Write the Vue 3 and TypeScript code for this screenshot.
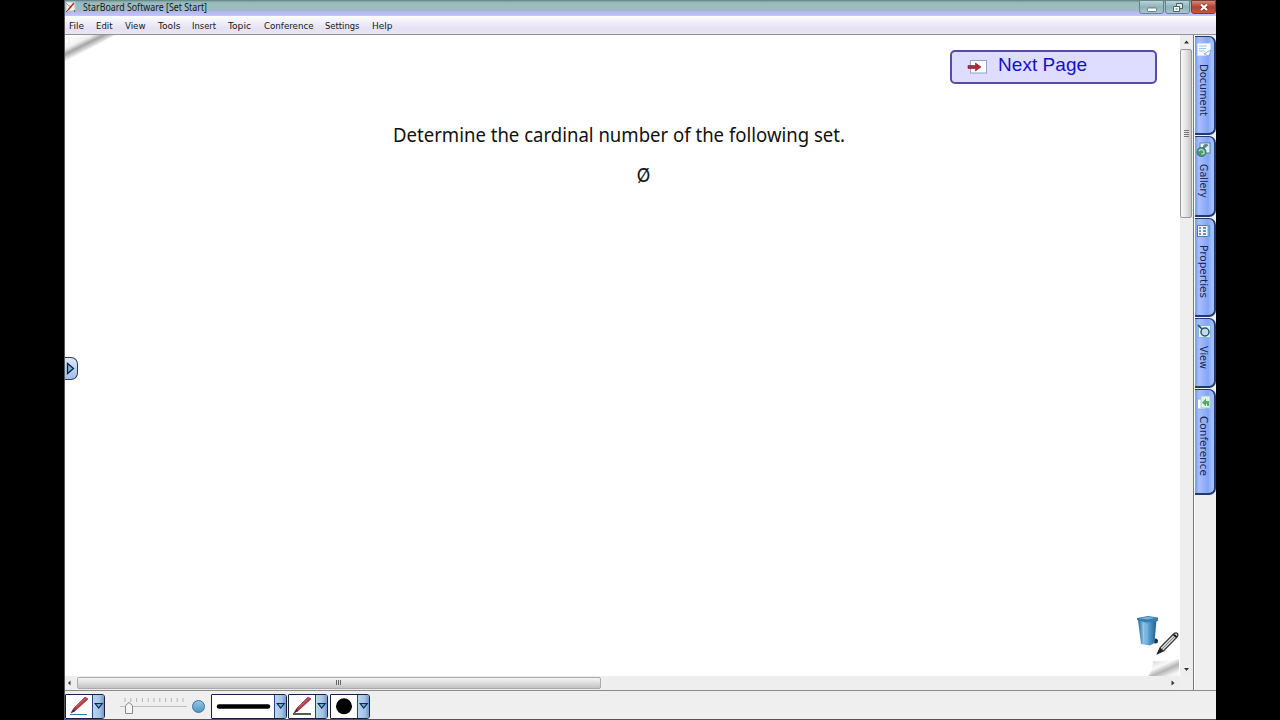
<script setup lang="ts">
interface MenuItem { label: string; left: number; width: number }
interface Tab { label: string; icon: string; height: number; start: number; length: number }

const menus: MenuItem[] = [
  { label: 'File', left: 3.5, width: 15 },
  { label: 'Edit', left: 12, width: 16.5 },
  { label: 'View', left: 12.5, width: 20.5 },
  { label: 'Tools', left: 12.5, width: 22.5 },
  { label: 'Insert', left: 11.5, width: 24 },
  { label: 'Topic', left: 12.5, width: 23 },
  { label: 'Conference', left: 12.5, width: 49.5 },
  { label: 'Settings', left: 12, width: 34.5 },
  { label: 'Help', left: 12.5, width: 20.5 },
]

const tabs: Tab[] = [
  { label: 'Document', icon: 'document', height: 99, start: 27, length: 52 },
  { label: 'Gallery', icon: 'gallery', height: 81, start: 27, length: 34 },
  { label: 'Properties', icon: 'properties', height: 99, start: 26, length: 53 },
  { label: 'View', icon: 'view', height: 70, start: 27, length: 23 },
  { label: 'Conference', icon: 'conference', height: 106, start: 26, length: 60 },
]

const ticks: number[] = Array.from({ length: 11 }, (_, i) => 5 + i * 5.8)
</script>

<template>
  <div class="screen">
    <div class="window">
      <header class="titlebar">
        <svg class="app-icon" width="12" height="12" viewBox="0 0 12 12">
          <rect x="1" y="1" width="9" height="9" fill="#f5f3ed" stroke="#c3c4bd" />
          <path d="M1 2l3 3 3 1" stroke="#cf8b48" fill="none" />
          <path d="M3 9l6-7" stroke="#ad3030" stroke-width="1.6" />
          <path d="M1 11l2-2M9 9l1 2" stroke="#4d5362" />
        </svg>
        <svg class="title" width="130" height="15">
          <text x="0" y="11" textLength="124" lengthAdjust="spacingAndGlyphs">StarBoard Software [Set Start]</text>
        </svg>
        <div class="controls">
          <div class="ctl">
            <svg width="23" height="13"><rect x="7.5" y="7" width="9" height="3.5" rx="1" fill="#fff" stroke="#53686e" stroke-width=".8" /></svg>
          </div>
          <div class="ctl">
            <svg width="23" height="13"><path d="M10.5 2.5h6v5h-6z" fill="#d9e6e8" stroke="#4f6268" /><path d="M7.500 5.500h6v5h-6z" fill="#fff" stroke="#4f6268" /><path d="M9.500 8h2" stroke="#4f6268" /></svg>
          </div>
          <div class="ctl close">
            <svg width="23" height="13"><path d="M9 3.500l6 5.500M15 3.500l-6 5.500" stroke="#6c3030" stroke-width="3.600" /><path d="M9 3.500l6 5.500M15 3.500l-6 5.500" stroke="#fff" stroke-width="2.200" /></svg>
          </div>
        </div>
      </header>

      <nav class="menubar">
        <svg v-for="m in menus" :key="m.label" :width="m.width" height="18" :style="{ marginLeft: m.left + 'px' }">
          <text x="0" y="13" :textLength="m.width" lengthAdjust="spacingAndGlyphs">{{ m.label }}</text>
        </svg>
      </nav>

      <main class="workspace">
        <section class="board">
          <div class="page">
            <svg class="curl-top" width="60" height="32" viewBox="0 0 60 32">
              <defs>
                <linearGradient id="curlA" gradientUnits="userSpaceOnUse" x1="12" y1="1" x2="20" y2="17">
                  <stop offset="0" stop-color="#fff" /><stop offset=".35" stop-color="#f0f0f0" />
                  <stop offset=".62" stop-color="#a4a4a4" /><stop offset="1" stop-color="#fff" />
                </linearGradient>
              </defs>
              <path d="M0 0H50L0 27z" fill="url(#curlA)" />
              <path d="M4 10V3h22" fill="none" stroke="#ececec" />
            </svg>
            <button class="next">
              <svg width="22" height="18" viewBox="0 0 22 18">
                <rect x="3.500" y="2.500" width="16" height="12.500" fill="#fafcff" stroke="#91a6c7" />
                <path d="M1 7.500h7.500V5l5.500 4-5.500 4v-2.500H1z" fill="#b32835" stroke="#7c1d28" stroke-width=".6" />
              </svg>
              <span>Next Page</span>
            </button>
            <svg class="question" width="460" height="30">
              <text x="0" y="21" textLength="452" lengthAdjust="spacingAndGlyphs">Determine the cardinal number of the following set.</text>
            </svg>
            <svg class="emptyset" width="20" height="24">
              <text x="2" y="18" textLength="13" lengthAdjust="spacingAndGlyphs">Ø</text>
            </svg>
            <div class="expander">
              <svg width="13" height="22" viewBox="0 0 13 22">
                <path d="M2.500 5.500v10l6-5z" fill="#7bb3df" stroke="#101e42" stroke-width="1.300" />
              </svg>
            </div>
            <svg class="bin" width="24" height="34" viewBox="0 0 24 34">
              <defs><linearGradient id="binFill"><stop offset="0" stop-color="#28699d" /><stop offset=".3" stop-color="#8ac1e6" /><stop offset=".65" stop-color="#4d94c8" /><stop offset="1" stop-color="#285d8b" /></linearGradient></defs>
              <circle cx="19.500" cy="26" r="2.500" fill="#253449" />
              <path d="M2 5h18.500l-2 23-4.500 2.500-9-1.500z" fill="url(#binFill)" />
              <path d="M1 3l11-2 10 1.500v3.500L10 7.500 1 5z" fill="#3b7cad" />
              <path d="M3 3l9-1 8 1-9 1.500z" fill="#79b3d8" />
              <path d="M7 9l1 17M11 9v19" stroke="#b0d7ef" opacity=".45" />
            </svg>
            <svg class="pen" width="26" height="26" viewBox="0 0 26 26">
              <path d="M2.500 22.500l2.700-6L18.500 3q2.500-2 3.900-.6t-.7 4L8.500 20z" fill="#d5d5d5" stroke="#333" stroke-width="1.200" />
              <path d="M7 18L19.500 5.500" stroke="#888" />
              <path d="M2 23.500l3-7 3.700 3z" fill="#252525" /><path d="M18.500 3.500l3.500 3" stroke="#222" stroke-width="2" />
            </svg>
            <svg class="curl-bottom" width="32" height="17" viewBox="0 0 32 17">
              <defs><linearGradient id="curlB" gradientUnits="userSpaceOnUse" x1="11" y1="0" x2="19" y2="18"><stop offset="0" stop-color="#dedede" /><stop offset=".35" stop-color="#f8f8f8" /><stop offset=".65" stop-color="#b4b4b4" /><stop offset="1" stop-color="#f5f5f5" /></linearGradient></defs>
              <path d="M0 17Q5 12 5 2Q18 3 31 0V17z" fill="url(#curlB)" />
            </svg>
          </div>
          <div class="vscroll">
            <svg width="13" height="14"><path d="M4 8.500l2.500-3L9 8.500z" fill="#333" /></svg>
            <div class="vthumb"><i class="grip"></i></div>
            <svg class="end" width="13" height="14"><path d="M4 6h5L6.500 9z" fill="#333" /></svg>
          </div>
          <div class="hscroll">
            <svg width="12" height="12"><path d="M5.500 3.500v5L3 6z" fill="#333" /></svg>
            <div class="hthumb"><i class="grip"></i></div>
            <svg class="end" width="14" height="12"><path d="M5.500 3.500v5l3-2.500z" fill="#333" /></svg>
          </div>
        </section>

        <aside class="tabs">
          <div v-for="t in tabs" :key="t.label" class="tab" :style="{ height: t.height + 'px' }">
            <svg width="19" :height="t.height - 2">
              <g v-if="t.icon === 'document'">
                <path d="M2.500 6.500h13v9l-3 3h-10z" fill="#f7fbff" stroke="#cfe1f8" />
                <path d="M4 9h8M4 11.500h7M4 14h6" stroke="#9ac6ee" /><path d="M9 17l7-4-2 6z" fill="#fff" stroke="#5c8dc9" stroke-width=".7" />
              </g>
              <g v-else-if="t.icon === 'gallery'">
                <rect x="5" y="6" width="10" height="10" fill="#eaf5f9" stroke="#5f8295" />
                <circle cx="11" cy="10" r="3" fill="#5d8293" /><path d="M10 11l4-3v6h-5z" fill="#ddeef5" />
                <circle cx="6.500" cy="15" r="4.500" fill="#4a967c" stroke="#367267" /><path d="M3.500 14q3-3 5 0t-2 3" fill="none" stroke="#b0dba7" stroke-width="1.500" />
              </g>
              <g v-else-if="t.icon === 'properties'">
                <rect x="2.500" y="6.500" width="12" height="11" fill="#edf7ff" stroke="#4f7cae" /><path d="M13.500 6v12" stroke="#70a5d5" stroke-width="2" />
                <path d="M4 9h2M8 9h3M4 12h2M8 12h3M4 15h2M8 15h3" stroke="#4f7196" stroke-width="1.300" />
              </g>
              <g v-else-if="t.icon === 'view'">
                <path d="M3.500 6.500h12v12h-12z" fill="#e0f1f7" stroke="#83b9cd" /><circle cx="10" cy="13" r="4" fill="#c3dcec" stroke="#334f6c" stroke-width="1.500" /><path d="M3 6l4 4" stroke="#2d495f" stroke-width="1.700" />
              </g>
              <g v-else>
                <path d="M2.500 9h8v10h-8z" fill="#fff" stroke="#8cb2ca" /><path d="M6 6h9v12H6z" fill="#e5f3ed" stroke="#a6c9cc" /><path d="M7 12.500l4-4v2.500h3v5h-2v-2h-1v2.500z" fill="#53ae62" />
              </g>
              <text :transform="`translate(4.500 ${t.start}) rotate(90)`" :textLength="t.length" lengthAdjust="spacingAndGlyphs">{{ t.label }}</text>
            </svg>
          </div>
        </aside>
      </main>

      <footer class="toolbar">
        <div class="picker pencil">
          <svg class="swatch" width="26" height="22" viewBox="0 0 26 22"><path d="M4 19.500h17" stroke="#4275b0" /><path d="M5 18l3-5L19 2l3 2L10 15z" fill="#bd3544" stroke="#6e2635" stroke-width=".6" /><path d="M10 12L20 3" stroke="#e09495" stroke-width=".6" /><path d="M5 18l2.500-4 2 2z" fill="#382c32" /></svg>
          <span class="drop"><svg width="11" height="22"><path d="M2.200 8.500h7L5.700 13z" fill="#69add4" stroke="#17274b" stroke-width="1.200" /></svg></span>
        </div>
        <svg class="slider" width="70" height="24">
          <path v-for="x in ticks" :key="x" :d="`M${x} 4v4`" stroke="#b6b6b6" />
          <path d="M0 12.500h67" stroke="#bebebe" /><path d="M5.500 19.500v-8L9 8.500l3.500 3v8z" fill="#f5f5f5" stroke="#898989" />
        </svg>
        <i class="dot"></i>
        <div class="picker line">
          <svg class="swatch" width="61" height="22"><path d="M7 11.500h49" stroke="#000" stroke-width="4.500" stroke-linecap="round" /></svg>
          <span class="drop"><svg width="11" height="22"><path d="M2.200 8.500h7L5.700 13z" fill="#69add4" stroke="#17274b" stroke-width="1.200" /></svg></span>
        </div>
        <div class="picker color">
          <svg class="swatch" width="26" height="22" viewBox="0 0 26 22"><path d="M4 19h18" stroke="#222" stroke-width="1.500" /><path d="M5 18l3-5L19 2l3 2L10 15z" fill="#bd3544" stroke="#6e2635" stroke-width=".6" /><path d="M10 12L20 3" stroke="#e09495" stroke-width=".6" /><path d="M5 18l2.500-4 2 2z" fill="#382c32" /></svg>
          <span class="drop"><svg width="11" height="22"><path d="M2.200 8.500h7L5.700 13z" fill="#69add4" stroke="#17274b" stroke-width="1.200" /></svg></span>
        </div>
        <div class="picker size">
          <svg class="swatch" width="26" height="22"><circle cx="13" cy="11.300" r="8" fill="#000" /></svg>
          <span class="drop"><svg width="11" height="22"><path d="M2.200 8.500h7L5.700 13z" fill="#69add4" stroke="#17274b" stroke-width="1.200" /></svg></span>
        </div>
      </footer>
    </div>
  </div>
</template>

<style>
body { margin: 0; background: #000; }
</style>

<style scoped>
* { box-sizing: border-box; }
svg { display: block; flex: none; overflow: visible; }
.screen { width: 1280px; height: 720px; background: #000; padding: 0 64px; overflow: hidden; }
.window { width: 1152px; height: 720px; display: flex; flex-direction: column; background: #efefef; border-left: 1px solid #555; border-bottom: 1px solid #555; }
.titlebar { height: 16px; flex: none; display: flex; align-items: flex-start; background: linear-gradient(#57716f 0, #7da3a3 1px, #9bbcbc 3px, #9ebbc0 10px, #b5b7ef 12px, #c5c5ff 16px); }
.app-icon { margin-top: 1px; }
.title { margin: 0 0 0 6px; }
.title text, .menubar text { font-family: "Noto Sans", sans-serif; font-size: 10px; fill: #111a22; }
.menubar text { font-family: "DejaVu Sans", sans-serif; font-size: 9.500px; }
.controls { margin-left: auto; display: flex; gap: 1px; }
.ctl { width: 25px; height: 14px; border: 1px solid #65838a; border-radius: 0 0 3px 3px; background: linear-gradient(#b8d3d4, #8fb3ba 50%, #a4c6d0); }
.close { border-color: #803a35; background: linear-gradient(#d18a7d, #b8412f 50%, #c45840); }
.menubar { height: 19px; flex: none; display: flex; background: linear-gradient(#fff 0, #f5f4fb 4px, #e5e0f3 13px, #e9e6f5 18px); border-bottom: 1px solid #929292; }
.workspace { height: 656px; flex: none; display: flex; border-bottom: 1px solid #8c8c8c; }
.board { width: 1129px; flex: none; display: grid; grid-template-columns: 1115px 13px; grid-template-rows: 641px 14px; border-right: 1px solid #777; background: #efefef; }
.page { position: relative; background: #fff; }
.curl-top { position: absolute; left: 0; top: 0; }
.curl-bottom { position: absolute; left: 1083px; top: 624px; }
.next { position: absolute; left: 885px; top: 15px; width: 207px; height: 34px; display: flex; align-items: flex-start; gap: 9px; padding: 6px 0 0 15px; border: 2px solid #554ba9; border-radius: 5px; background: #dfddff; font: 19px/20px "Liberation Sans", Arial, sans-serif; color: #1410c4; }
.next span { margin-top: -3px; letter-spacing: .05px; white-space: nowrap; }
.question { position: absolute; left: 328px; top: 86px; }
.question text { font: 20px "Noto Sans", sans-serif; fill: #111; }
.emptyset { position: absolute; left: 570px; top: 129px; }
.emptyset text { font: 20px Lato, sans-serif; fill: #111; stroke: #111; stroke-width: .2px; }
.expander { position: absolute; left: 0; top: 322px; width: 13px; height: 23px; border: 1px solid #303c58; border-left: 0; border-radius: 0 7px 7px 0; background: linear-gradient(#dce8f8, #9ebee8); }
.bin { position: absolute; left: 1071px; top: 580px; }
.pen { position: absolute; left: 1090px; top: 596px; }
.vscroll { display: flex; flex-direction: column; background: #eee; }
.vthumb { width: 12px; height: 169px; border: 1px solid #999; border-radius: 2px; background: linear-gradient(90deg, #f8f8f8, #e5e5e5 50%, #c5c5c5); display: flex; align-items: center; justify-content: center; }
.vthumb .grip { width: 5px; height: 7px; background: repeating-linear-gradient(#777 0 1px, transparent 1px 2px); }
.end { margin-top: auto; }
.hscroll { display: flex; align-items: flex-start; background: #eee; padding-top: 1px; }
.hthumb { width: 524px; height: 12px; border: 1px solid #aaa; border-radius: 2px; background: linear-gradient(#f5f5f5, #ddd 50%, #c2c2c2); display: flex; align-items: center; justify-content: center; }
.hthumb .grip { width: 6px; height: 5px; margin-top: -2px; background: repeating-linear-gradient(90deg, #666 0 1px, transparent 1px 2px); }
.hscroll .end { margin: 0 0 0 auto; }
.tabs { flex: 1; padding: 1px 0 0 0; border-left: 1px solid #fff; background: #efefef; }
.tab { width: 21px; margin-bottom: 1px; border: solid #253a6c; border-width: 1px 2px 2px 0; border-radius: 0 7px 7px 0; background: linear-gradient(90deg, #7299ed 0, #a8bfff 4px, #94b0fb 9px, #83a5f6 13px, #a1bfff 17px); overflow: hidden; }
.tab text { font: 10px "DejaVu Sans", Verdana, sans-serif; fill: #152650; }
.toolbar { height: 28px; flex: none; display: flex; align-items: flex-start; padding-top: 3px; background: #efefef; }
.picker { height: 25px; display: flex; border: 1px solid #172042; border-radius: 1px 3px 3px 1px; background: #fff; overflow: hidden; }
.pencil { width: 40px; }
.drop { margin-left: auto; width: 12px; border-left: 1px solid #244779; background: linear-gradient(90deg, #b9d5f0, #a4c5e8 60%, #7298cc); }
.slider { margin-left: 15px; }
.dot { width: 13px; height: 13px; margin: 6px 6px 0 2px; flex: none; border: 1px solid #39719a; border-radius: 50%; background: linear-gradient(#90c5e7, #5597c8); }
.line { width: 76px; }
.color, .size { width: 40px; margin-left: 1px; }
.size { margin-left: 2px; }
</style>
